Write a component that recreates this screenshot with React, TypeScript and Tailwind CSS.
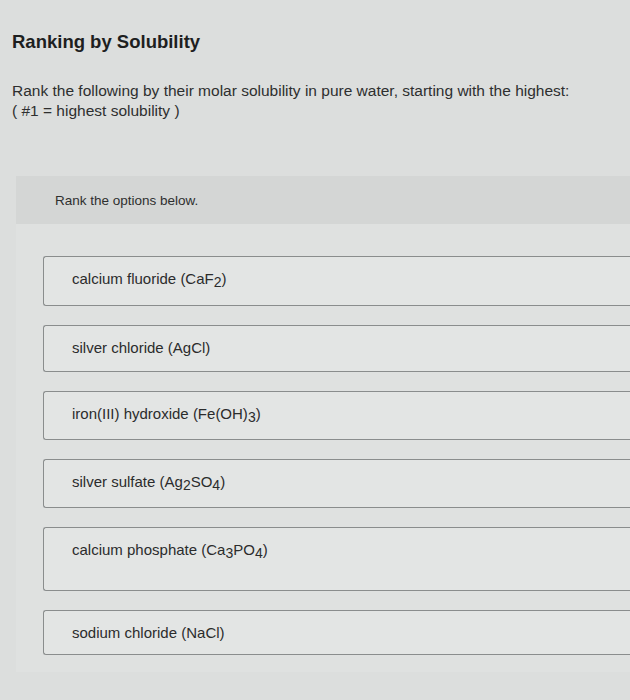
import * as React from "react";

type Option = { id: string; label: React.ReactNode; h: string };

function Sub({ children }: { children: React.ReactNode }) {
    return <span className="relative top-[3px] text-[14px]">{children}</span>;
}

const options: Option[] = [
    {
        id: "caf2",
        h: "h-[50px]",
        label: (
            <>
                calcium fluoride (CaF<Sub>2</Sub>)
            </>
        ),
    },
    { id: "agcl", h: "h-[47px]", label: <>silver chloride (AgCl)</> },
    {
        id: "feoh3",
        h: "h-[49px]",
        label: (
            <>
                iron(III) hydroxide (Fe(OH)<Sub>3</Sub>)
            </>
        ),
    },
    {
        id: "ag2so4",
        h: "h-[49px]",
        label: (
            <>
                silver sulfate (Ag<Sub>2</Sub>SO<Sub>4</Sub>)
            </>
        ),
    },
    {
        id: "ca3po4",
        h: "h-[64px]",
        label: (
            <>
                calcium phosphate (Ca<Sub>3</Sub>PO<Sub>4</Sub>)
            </>
        ),
    },
    { id: "nacl", h: "h-[45px]", label: <>sodium chloride (NaCl)</> },
];

export default function App() {
    return (
        <div className="h-[700px] w-[630px] overflow-hidden bg-[#dcdedd] font-['Liberation_Sans',Arial,sans-serif] text-[#2b2c2c]">
            <div className="px-3 pt-[31px]">
                <h1 className="text-[18.5px] font-bold leading-[22px] text-[#1e1f1f]">
                    Ranking by Solubility
                </h1>
                <p className="mt-[28px] text-[15.5px] leading-[20px] text-[#2e2f2f]">
                    Rank the following by their molar solubility in pure water, starting with the highest:
                    <br />( #1 = highest solubility )
                </p>
            </div>

            <div className="ml-4 mt-[55px] h-[496px] bg-[#dfe1e0]">
                <div className="h-[48px] bg-[#d4d6d5] pl-[39px] pt-[15px] text-[13.5px] text-[#2e2f2f]">
                    Rank the options below.
                </div>
                <div className="flex flex-col gap-[19px] pl-[27px] pt-[32px]">
                    {options.map((o) => (
                        <div
                            key={o.id}
                            className={`${o.h} rounded-l-[3px] border border-r-0 border-[#8a8d8d] bg-[#e3e5e4] pl-[28px] pt-[12px] text-[15px] leading-[19px]`}
                        >
                            {o.label}
                        </div>
                    ))}
                </div>
            </div>
        </div>
    );
}
